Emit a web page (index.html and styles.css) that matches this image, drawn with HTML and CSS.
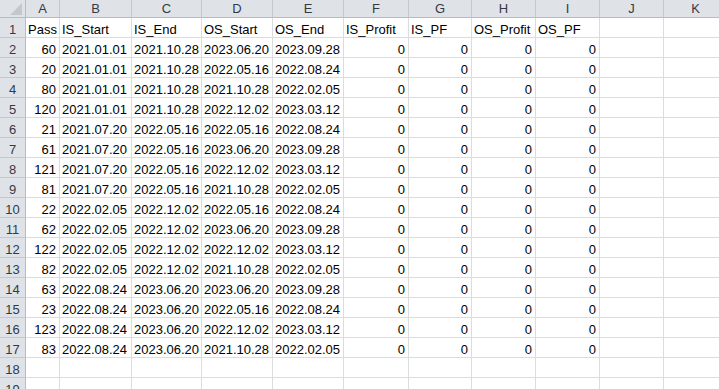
FILE: index.html
```html
<!DOCTYPE html>
<html>
<head>
<meta charset="utf-8">
<link rel="stylesheet" href="styles.css">
</head>
<body>
<div class="sheet">
<div class="corner"><svg class="tri" width="12" height="12" viewBox="0 0 12 12"><polygon points="12,0 12,12 0,12"/></svg></div>
<div class="ch">A</div><div class="ch">B</div><div class="ch">C</div><div class="ch">D</div><div class="ch">E</div><div class="ch">F</div><div class="ch">G</div><div class="ch">H</div><div class="ch">I</div><div class="ch">J</div><div class="ch">K</div>

<div class="rh">1</div><div class="c">Pass</div><div class="c">IS_Start</div><div class="c">IS_End</div><div class="c">OS_Start</div><div class="c">OS_End</div><div class="c">IS_Profit</div><div class="c">IS_PF</div><div class="c">OS_Profit</div><div class="c">OS_PF</div><div class="c"></div><div class="c"></div>

<div class="rh">2</div><div class="c n">60</div><div class="c">2021.01.01</div><div class="c">2021.10.28</div><div class="c">2023.06.20</div><div class="c">2023.09.28</div><div class="c n">0</div><div class="c n">0</div><div class="c n">0</div><div class="c n">0</div><div class="c"></div><div class="c"></div>

<div class="rh">3</div><div class="c n">20</div><div class="c">2021.01.01</div><div class="c">2021.10.28</div><div class="c">2022.05.16</div><div class="c">2022.08.24</div><div class="c n">0</div><div class="c n">0</div><div class="c n">0</div><div class="c n">0</div><div class="c"></div><div class="c"></div>

<div class="rh">4</div><div class="c n">80</div><div class="c">2021.01.01</div><div class="c">2021.10.28</div><div class="c">2021.10.28</div><div class="c">2022.02.05</div><div class="c n">0</div><div class="c n">0</div><div class="c n">0</div><div class="c n">0</div><div class="c"></div><div class="c"></div>

<div class="rh">5</div><div class="c n">120</div><div class="c">2021.01.01</div><div class="c">2021.10.28</div><div class="c">2022.12.02</div><div class="c">2023.03.12</div><div class="c n">0</div><div class="c n">0</div><div class="c n">0</div><div class="c n">0</div><div class="c"></div><div class="c"></div>

<div class="rh">6</div><div class="c n">21</div><div class="c">2021.07.20</div><div class="c">2022.05.16</div><div class="c">2022.05.16</div><div class="c">2022.08.24</div><div class="c n">0</div><div class="c n">0</div><div class="c n">0</div><div class="c n">0</div><div class="c"></div><div class="c"></div>

<div class="rh">7</div><div class="c n">61</div><div class="c">2021.07.20</div><div class="c">2022.05.16</div><div class="c">2023.06.20</div><div class="c">2023.09.28</div><div class="c n">0</div><div class="c n">0</div><div class="c n">0</div><div class="c n">0</div><div class="c"></div><div class="c"></div>

<div class="rh">8</div><div class="c n">121</div><div class="c">2021.07.20</div><div class="c">2022.05.16</div><div class="c">2022.12.02</div><div class="c">2023.03.12</div><div class="c n">0</div><div class="c n">0</div><div class="c n">0</div><div class="c n">0</div><div class="c"></div><div class="c"></div>

<div class="rh">9</div><div class="c n">81</div><div class="c">2021.07.20</div><div class="c">2022.05.16</div><div class="c">2021.10.28</div><div class="c">2022.02.05</div><div class="c n">0</div><div class="c n">0</div><div class="c n">0</div><div class="c n">0</div><div class="c"></div><div class="c"></div>

<div class="rh">10</div><div class="c n">22</div><div class="c">2022.02.05</div><div class="c">2022.12.02</div><div class="c">2022.05.16</div><div class="c">2022.08.24</div><div class="c n">0</div><div class="c n">0</div><div class="c n">0</div><div class="c n">0</div><div class="c"></div><div class="c"></div>

<div class="rh">11</div><div class="c n">62</div><div class="c">2022.02.05</div><div class="c">2022.12.02</div><div class="c">2023.06.20</div><div class="c">2023.09.28</div><div class="c n">0</div><div class="c n">0</div><div class="c n">0</div><div class="c n">0</div><div class="c"></div><div class="c"></div>

<div class="rh">12</div><div class="c n">122</div><div class="c">2022.02.05</div><div class="c">2022.12.02</div><div class="c">2022.12.02</div><div class="c">2023.03.12</div><div class="c n">0</div><div class="c n">0</div><div class="c n">0</div><div class="c n">0</div><div class="c"></div><div class="c"></div>

<div class="rh">13</div><div class="c n">82</div><div class="c">2022.02.05</div><div class="c">2022.12.02</div><div class="c">2021.10.28</div><div class="c">2022.02.05</div><div class="c n">0</div><div class="c n">0</div><div class="c n">0</div><div class="c n">0</div><div class="c"></div><div class="c"></div>

<div class="rh">14</div><div class="c n">63</div><div class="c">2022.08.24</div><div class="c">2023.06.20</div><div class="c">2023.06.20</div><div class="c">2023.09.28</div><div class="c n">0</div><div class="c n">0</div><div class="c n">0</div><div class="c n">0</div><div class="c"></div><div class="c"></div>

<div class="rh">15</div><div class="c n">23</div><div class="c">2022.08.24</div><div class="c">2023.06.20</div><div class="c">2022.05.16</div><div class="c">2022.08.24</div><div class="c n">0</div><div class="c n">0</div><div class="c n">0</div><div class="c n">0</div><div class="c"></div><div class="c"></div>

<div class="rh">16</div><div class="c n">123</div><div class="c">2022.08.24</div><div class="c">2023.06.20</div><div class="c">2022.12.02</div><div class="c">2023.03.12</div><div class="c n">0</div><div class="c n">0</div><div class="c n">0</div><div class="c n">0</div><div class="c"></div><div class="c"></div>

<div class="rh">17</div><div class="c n">83</div><div class="c">2022.08.24</div><div class="c">2023.06.20</div><div class="c">2021.10.28</div><div class="c">2022.02.05</div><div class="c n">0</div><div class="c n">0</div><div class="c n">0</div><div class="c n">0</div><div class="c"></div><div class="c"></div>

<div class="rh">18</div><div class="c"></div><div class="c"></div><div class="c"></div><div class="c"></div><div class="c"></div><div class="c"></div><div class="c"></div><div class="c"></div><div class="c"></div><div class="c"></div><div class="c"></div>

<div class="rh">19</div><div class="c"></div><div class="c"></div><div class="c"></div><div class="c"></div><div class="c"></div><div class="c"></div><div class="c"></div><div class="c"></div><div class="c"></div><div class="c"></div><div class="c"></div>
</div>
</body>
</html>
```

FILE: styles.css
```css
html, body {
  margin: 0;
  padding: 0;
  background: #ffffff;
  overflow: hidden;
}

.sheet {
  display: grid;
  grid-template-columns: 26px 34px 72px 70px 71px 71px 65px 63px 64px 64px 64px 64px;
  grid-template-rows: 18px repeat(19, 20px);
  width: 728px;
  font-family: "Liberation Sans", Arial, sans-serif;
  font-size: 13px;
  color: #000000;
}

.sheet > div {
  box-sizing: border-box;
  border-right: 1px solid #dadcdd;
  border-bottom: 1px solid #dadcdd;
  white-space: nowrap;
  overflow: hidden;
}

.corner {
  background: #dfe3e8;
  display: flex;
  justify-content: flex-end;
  align-items: flex-end;
  border-right-color: #b6bcc4 !important;
  border-bottom-color: #b6bcc4 !important;
}

.tri {
  display: block;
  margin: 0 3px 2px 0;
  fill: #c3c8ce;
}

.ch {
  background: #dfe3e8;
  color: #333a44;
  text-align: center;
  line-height: 17px;
  border-right-color: #c4c9cf !important;
  border-bottom-color: #b6bcc4 !important;
}

.rh {
  background: #dfe3e8;
  color: #333a44;
  display: flex;
  justify-content: center;
  align-items: flex-end;
  line-height: 15px;
  border-right-color: #b6bcc4 !important;
  border-bottom-color: #c4c9cf !important;
}

.c {
  display: flex;
  align-items: flex-end;
  line-height: 15px;
  padding: 0 3px 0 2px;
}

.n {
  justify-content: flex-end;
}
```
